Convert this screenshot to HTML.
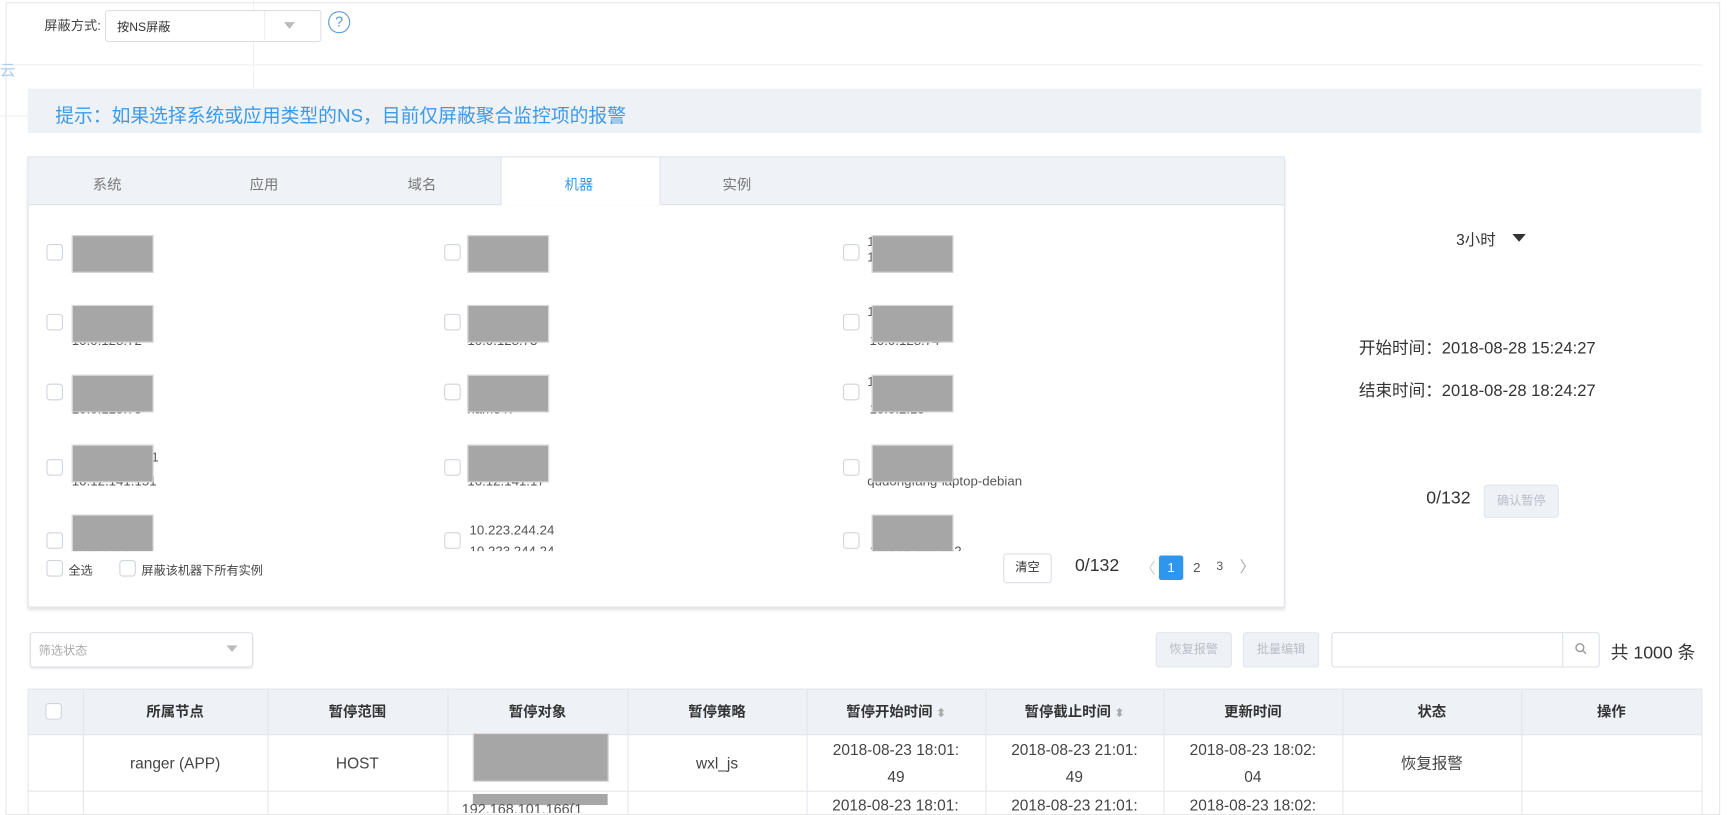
<!DOCTYPE html>
<html><head><meta charset="utf-8"><style>
html,body{margin:0;padding:0;width:1729px;height:815px;overflow:hidden;background:#fff}
#w{position:absolute;left:0;top:0;width:1565px;height:735px;transform:scale(1.1048,1.1089);transform-origin:0 0;font-family:"Liberation Sans","Noto Sans CJK SC",sans-serif;color:#333}
.a{position:absolute}
.cb{position:absolute;width:13px;height:13px;border:1px solid #d0d4db;border-radius:3px;background:#fff}
.g{position:absolute;width:72px;height:32px;background:#a6a6a6;border:1px solid #d8d8d8}
.t{position:absolute;font-size:12px;color:#555;white-space:nowrap}
.th{position:absolute;top:621px;height:41px;line-height:41px;text-align:center;font-size:13px;font-weight:bold;color:#333}
.td{position:absolute;text-align:center;font-size:14px;color:#444;line-height:24px}
.vl{position:absolute;top:621px;width:1px;height:114px;background:#e3e6eb}
.btn{position:absolute;border:1px solid #e2e5ea;background:#eef1f5;border-radius:3px;font-size:11px;color:#b9bec6;text-align:center}
</style></head><body><div id="w">
<!-- outer frame -->
<div class="a" style="left:5px;top:2px;width:1550px;height:731px;border:1px solid #e6e6e6"></div>
<div class="a" style="left:0;top:58px;width:1540px;height:1px;background:#eceef1"></div>
<div class="a" style="left:229px;top:0;width:1px;height:105px;background:#f0f0f0"></div>
<div class="a" style="left:0;top:104px;width:230px;height:1px;background:#f0f0f0"></div>
<div class="a" style="left:0;top:53px;font-size:14px;color:#a9cdee">云</div>
<div class="a" style="left:40px;top:14px;font-size:12px;color:#444">屏蔽方式:</div>
<div class="a" style="left:95px;top:9px;width:194px;height:27px;border:1px solid #dcdfe5;border-radius:3px;background:#fff"></div>
<div class="a" style="left:239px;top:10px;width:1px;height:26px;background:#eee"></div>
<div class="a" style="left:106px;top:16px;font-size:11px;color:#333">按NS屏蔽</div>
<div class="a" style="left:257px;top:20px;width:0;height:0;border-left:5px solid transparent;border-right:5px solid transparent;border-top:6px solid #bbb"></div>
<div class="a" style="left:297px;top:10px;width:18px;height:18px;border:1.5px solid #5a9ad6;border-radius:50%;color:#5a9ad6;font-size:13px;line-height:18px;text-align:center">?</div>
<!-- tip -->
<div class="a" style="left:25px;top:80px;width:1515px;height:40px;background:#eef1f5"></div>
<div class="a" style="left:50px;top:90px;font-size:17px;color:#3d9ae6">提示：如果选择系统或应用类型的NS，目前仅屏蔽聚合监控项的报警</div>
<!-- panel -->
<div class="a" style="left:25px;top:141px;width:1136px;height:405px;border:1px solid #dfe2e7;box-shadow:0 2px 3px rgba(0,0,0,.12);background:#fff"></div>
<div class="a" style="left:26px;top:142px;width:1136px;height:42px;background:#eff2f6;border-bottom:1px solid #dfe2e7"></div>
<div class="a" style="left:453px;top:142px;width:143px;height:43px;background:#fff;border-left:1px solid #dfe2e7;border-right:1px solid #dfe2e7"></div>
<div class="a" style="left:84px;top:156px;font-size:13px;color:#777">系统</div>
<div class="a" style="left:226px;top:156px;font-size:13px;color:#777">应用</div>
<div class="a" style="left:369px;top:156px;font-size:13px;color:#777">域名</div>
<div class="a" style="left:511px;top:156px;font-size:13px;color:#3d9ae6">机器</div>
<div class="a" style="left:654px;top:156px;font-size:13px;color:#777">实例</div>
<!-- grid -->
<div class="a" style="left:26px;top:200px;width:1130px;height:297px;overflow:hidden">
<div style="position:relative;left:-26px;top:-200px">
<div class="cb" style="left:42px;top:220px"></div><div class="g" style="left:65px;top:212px"></div>
<div class="cb" style="left:402px;top:220px"></div><div class="g" style="left:423px;top:212px"></div>
<div class="cb" style="left:763px;top:220px"></div><div class="t" style="left:785px;top:211px">1<br>1</div><div class="g" style="left:789px;top:212px"></div>

<div class="cb" style="left:42px;top:283px"></div><div class="t" style="left:65px;top:300px">10.0.128.72</div><div class="g" style="left:65px;top:275px"></div>
<div class="cb" style="left:402px;top:283px"></div><div class="t" style="left:423px;top:300px">10.0.128.73</div><div class="g" style="left:423px;top:275px"></div>
<div class="cb" style="left:763px;top:283px"></div><div class="t" style="left:785px;top:274px">1</div><div class="t" style="left:787px;top:300px">10.0.128.74</div><div class="g" style="left:789px;top:275px"></div>

<div class="cb" style="left:42px;top:346px"></div><div class="t" style="left:65px;top:362px">10.0.128.75</div><div class="g" style="left:65px;top:338px"></div>
<div class="cb" style="left:402px;top:346px"></div><div class="t" style="left:423px;top:362px">name47</div><div class="g" style="left:423px;top:338px"></div>
<div class="cb" style="left:763px;top:346px"></div><div class="t" style="left:785px;top:337px">1</div><div class="t" style="left:787px;top:362px">10.0.2.15</div><div class="g" style="left:789px;top:338px"></div>

<div class="cb" style="left:42px;top:414px"></div><div class="t" style="left:137px;top:405px">1</div><div class="t" style="left:65px;top:427px">10.12.141.151</div><div class="g" style="left:65px;top:401px"></div>
<div class="cb" style="left:402px;top:414px"></div><div class="t" style="left:423px;top:427px">10.12.141.17</div><div class="g" style="left:423px;top:401px"></div>
<div class="cb" style="left:763px;top:414px"></div><div class="t" style="left:785px;top:427px">qudongfang-laptop-debian</div><div class="g" style="left:789px;top:401px"></div>

<div class="cb" style="left:42px;top:480px"></div><div class="t" style="left:65px;top:490px">10.0.1.2.1</div><div class="g" style="left:65px;top:464px"></div>
<div class="cb" style="left:402px;top:480px"></div><div class="t" style="left:425px;top:471px">10.223.244.24</div><div class="t" style="left:425px;top:490px">10.223.244.24</div>
<div class="cb" style="left:763px;top:480px"></div><div class="t" style="left:787px;top:490px">10.223.244.102</div><div class="g" style="left:789px;top:464px"></div>
</div></div>
<div class="cb" style="left:42px;top:505px"></div><div class="a" style="left:62px;top:506px;font-size:11px;color:#444">全选</div>
<div class="cb" style="left:108px;top:505px"></div><div class="a" style="left:128px;top:506px;font-size:11px;color:#444">屏蔽该机器下所有实例</div>
<div class="a" style="left:908px;top:499px;width:42px;height:25px;border:1px solid #dcdfe5;border-radius:3px;font-size:11px;line-height:25px;text-align:center;color:#333">清空</div>
<div class="a" style="left:973px;top:502px;font-size:16px;color:#333">0/132</div>
<div class="a" style="left:1032px;top:502px;font-size:14px;color:#ccc">〈</div>
<div class="a" style="left:1049px;top:501px;width:22px;height:22px;background:#2e96ef;border-radius:2px;color:#fff;font-size:12px;line-height:22px;text-align:center">1</div>
<div class="a" style="left:1080px;top:505px;font-size:12px;color:#555">2</div>
<div class="a" style="left:1101px;top:505px;font-size:11px;color:#555">3</div>
<div class="a" style="left:1122px;top:501px;font-size:14px;color:#aaa">〉</div>
<!-- right -->
<div class="a" style="left:1318px;top:206px;font-size:14px;color:#333">3小时</div>
<div class="a" style="left:1369px;top:211px;width:0;height:0;border-left:6px solid transparent;border-right:6px solid transparent;border-top:7px solid #333"></div>
<div class="a" style="left:1230px;top:303px;font-size:15px;color:#333">开始时间：2018-08-28 15:24:27</div>
<div class="a" style="left:1230px;top:341px;font-size:15px;color:#333">结束时间：2018-08-28 18:24:27</div>
<div class="a" style="left:1291px;top:441px;font-size:16px;color:#333">0/132</div>
<div class="btn" style="left:1343px;top:437px;width:66px;height:28px;line-height:28px">确认暂停</div>
<!-- toolbar -->
<div class="a" style="left:27px;top:570px;width:200px;height:30px;border:1px solid #dcdfe5;border-radius:3px;box-shadow:0 1px 2px rgba(0,0,0,.08)"></div>
<div class="a" style="left:35px;top:578px;font-size:11px;color:#aaa">筛选状态</div>
<div class="a" style="left:205px;top:582px;width:0;height:0;border-left:5px solid transparent;border-right:5px solid transparent;border-top:6px solid #bbb"></div>
<div class="btn" style="left:1046px;top:570px;width:67px;height:30px;line-height:30px">恢复报警</div>
<div class="btn" style="left:1125px;top:570px;width:67px;height:30px;line-height:30px">批量编辑</div>
<div class="a" style="left:1205px;top:570px;width:241px;height:30px;border:1px solid #dcdfe5;border-radius:3px"></div>
<div class="a" style="left:1414px;top:571px;width:1px;height:30px;background:#dcdfe5"></div>
<svg class="a" style="left:1425px;top:579px" width="12" height="12" viewBox="0 0 12 12"><circle cx="5" cy="5" r="3.5" fill="none" stroke="#999" stroke-width="1.3"/><path d="M7.6 7.6L10.5 10.5" stroke="#999" stroke-width="1.3"/></svg>
<div class="a" style="left:1458px;top:575px;font-size:16px;color:#333">共 1000 条</div>
<!-- table -->
<div class="a" style="left:25px;top:621px;width:1515px;height:41px;background:#eef2f7;border-top:1px solid #e3e6eb"></div>
<div class="a" style="left:25px;top:662px;width:1515px;height:1px;background:#e3e6eb"></div>
<div class="a" style="left:25px;top:713px;width:1515px;height:1px;background:#e3e6eb"></div>
<div class="vl" style="left:25px"></div><div class="vl" style="left:75px"></div><div class="vl" style="left:242px"></div><div class="vl" style="left:405px"></div><div class="vl" style="left:568px"></div><div class="vl" style="left:730px"></div><div class="vl" style="left:892px"></div><div class="vl" style="left:1053px"></div><div class="vl" style="left:1215px"></div><div class="vl" style="left:1377px"></div><div class="vl" style="left:1540px"></div>
<div class="cb" style="left:41px;top:634px"></div>
<div class="th" style="left:75px;width:167px">所属节点</div>
<div class="th" style="left:242px;width:163px">暂停范围</div>
<div class="th" style="left:405px;width:163px">暂停对象</div>
<div class="th" style="left:568px;width:162px">暂停策略</div>
<div class="th" style="left:730px;width:162px">暂停开始时间 <span style="color:#aaa;font-size:10px">⬍</span></div>
<div class="th" style="left:892px;width:161px">暂停截止时间 <span style="color:#aaa;font-size:10px">⬍</span></div>
<div class="th" style="left:1053px;width:162px">更新时间</div>
<div class="th" style="left:1215px;width:162px">状态</div>
<div class="th" style="left:1377px;width:163px">操作</div>
<div class="td" style="left:75px;width:167px;top:676px">ranger (APP)</div>
<div class="td" style="left:242px;width:163px;top:676px">HOST</div>
<div class="a" style="left:428px;top:661px;width:121px;height:42px;background:#a6a6a6;border:1px solid #ddd"></div>
<div class="td" style="left:568px;width:162px;top:676px">wxl_js</div>
<div class="td" style="left:730px;width:162px;top:664px">2018-08-23 18:01:<br>49</div>
<div class="td" style="left:892px;width:161px;top:664px">2018-08-23 21:01:<br>49</div>
<div class="td" style="left:1053px;width:162px;top:664px">2018-08-23 18:02:<br>04</div>
<div class="td" style="left:1215px;width:162px;top:676px">恢复报警</div>
<div class="a" style="left:26px;top:714px;width:1514px;height:19px;overflow:hidden">
<div class="td" style="left:703px;width:163px;top:0px">2018-08-23 18:01:</div>
<div class="td" style="left:866px;width:161px;top:0px">2018-08-23 21:01:</div>
<div class="td" style="left:1027px;width:162px;top:0px">2018-08-23 18:02:</div>
<div class="a" style="left:402px;top:2px;width:122px;height:10px;background:#a6a6a6"></div>
<div class="a" style="left:392px;top:8px;font-size:13px;color:#555">192.168.101.166(1</div>
</div>
</div></body></html>
